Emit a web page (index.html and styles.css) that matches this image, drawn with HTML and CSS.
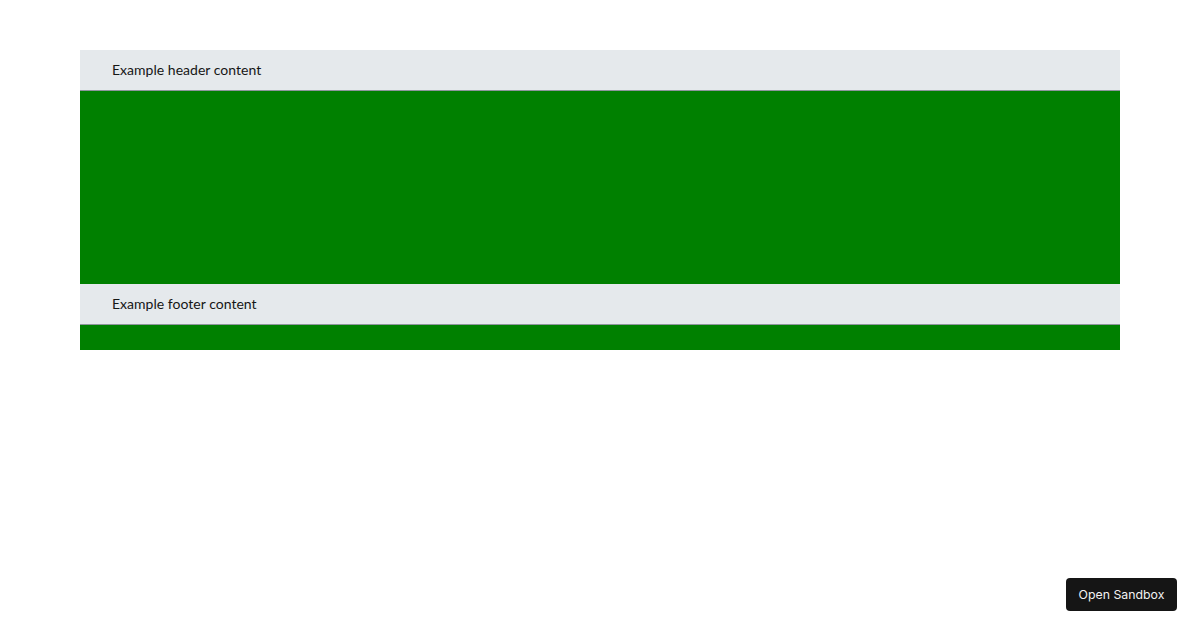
FILE: index.html
```html
<!DOCTYPE html>
<html>
<head>
<meta charset="utf-8">
<link rel="stylesheet" href="styles.css">
</head>
<body>
<div class="page">
  <header class="bar">Example header content</header>
  <main class="body-main"></main>
  <footer class="bar">Example footer content</footer>
  <div class="tail"></div>
</div>
<a class="sandbox" href="#">Open Sandbox</a>
</body>
</html>
```

FILE: styles.css
```css
html, body {
  margin: 0;
  padding: 0;
  background: #ffffff;
}
.page {
  margin: 50px 80px 0;
  display: flex;
  flex-direction: column;
}
.bar {
  height: 41px;
  box-sizing: border-box;
  background: #e5e9ec;
  border-bottom: 1px solid #8e959c;
  padding: 0 32px 1px;
  display: flex;
  align-items: center;
  font-family: Lato, "Liberation Sans", sans-serif;
  font-size: 14px;
  letter-spacing: 0.02px;
  color: #161616;
}
.body-main {
  height: 193px;
  background: #008000;
}
.tail {
  height: 25px;
  background: #008000;
}
.sandbox {
  position: fixed;
  right: 23px;
  bottom: 19px;
  width: 111px;
  height: 33px;
  box-sizing: border-box;
  background: #151515;
  color: #f2f2f2;
  border-radius: 4px;
  display: flex;
  align-items: center;
  justify-content: center;
  font-family: Inter, "Liberation Sans", sans-serif;
  font-size: 12.3px;
  text-decoration: none;
}
```
